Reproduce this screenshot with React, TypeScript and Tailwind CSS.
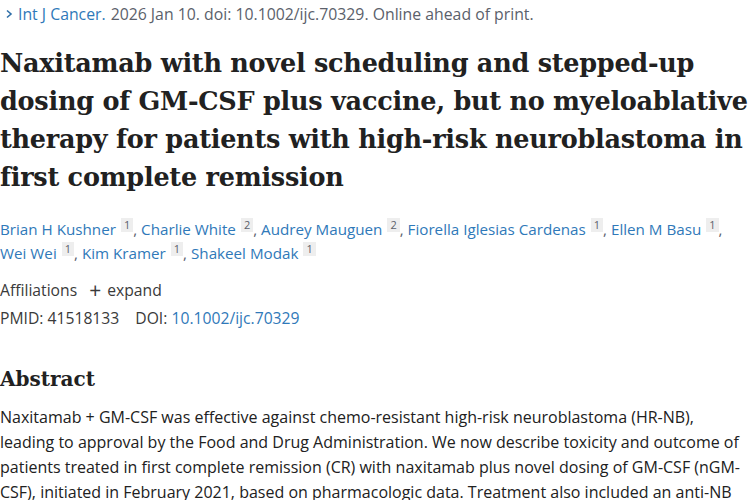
const authorRows: { name: string; aff: string }[][] = [
  [
    { name: "Brian H Kushner", aff: "1" },
    { name: "Charlie White", aff: "2" },
    { name: "Audrey Mauguen", aff: "2" },
    { name: "Fiorella Iglesias Cardenas", aff: "1" },
    { name: "Ellen M Basu", aff: "1" },
  ],
  [
    { name: "Wei Wei", aff: "1" },
    { name: "Kim Kramer", aff: "1" },
    { name: "Shakeel Modak", aff: "1" },
  ],
];

const abstractLines = [
  "Naxitamab + GM-CSF was effective against chemo-resistant high-risk neuroblastoma (HR-NB),",
  "leading to approval by the Food and Drug Administration. We now describe toxicity and outcome of",
  "patients treated in first complete remission (CR) with naxitamab plus novel dosing of GM-CSF (nGM-",
  "CSF), initiated in February 2021, based on pharmacologic data. Treatment also included an anti-NB",
];

export default function App() {
  return (
    <div
      className="w-[750px] h-[500px] overflow-hidden bg-white text-[#212121]"
      style={{ fontFamily: '"Open Sans", "Noto Sans", sans-serif' }}
    >
      <div className="pl-[2px] pt-[2px] text-[15.8px] leading-[24px] text-[#5b616b] flex items-center whitespace-nowrap">
        <svg width="14" height="14" viewBox="0 0 14 14" className="mr-[2px]">
          <path d="M5 3.5 L9 7 L5 10.5" fill="none" stroke="#2f6fa8" strokeWidth="1.6" />
        </svg>
        <a className="text-[#2f79b9] mr-[5px]">Int J Cancer.</a>
        <span>2026 Jan 10. doi: 10.1002/ijc.70329. Online ahead of print.</span>
      </div>

      <h1
        className="mt-[18px] text-[25.5px] leading-[38px] font-bold text-[#212121] tracking-[-0.25px] whitespace-nowrap"
        style={{ fontFamily: '"DejaVu Serif", "Liberation Serif", serif' }}
      >
        <span className="block">Naxitamab with novel scheduling and stepped-up</span>
        <span className="block">dosing of GM-CSF plus vaccine, but no myeloablative</span>
        <span className="block">therapy for patients with high-risk neuroblastoma in</span>
        <span className="block">first complete remission</span>
      </h1>

      <div className="mt-[21px] text-[15.2px] leading-[24px] whitespace-nowrap">
        {authorRows.map((row, r) => (
          <div key={r}>
            {row.map((a, i) => (
              <span key={a.name}>
                <a className="text-[#2f79b9]">{a.name}</a>
                <span className="inline-block align-top ml-[5px] mt-[1px] px-[3px] bg-[#eeeeee] text-[#5b616b] text-[11px] leading-[14px]">
                  {a.aff}
                </span>
                {(r === 0 || i < row.length - 1) && <span className="text-[#5b616b]">, </span>}
              </span>
            ))}
          </div>
        ))}
      </div>

      <div className="mt-[11px] text-[15.7px] leading-[28px] text-[#3a3a3a]">
        <div className="flex items-center">
          <span>Affiliations</span>
          <span className="ml-[12px] text-[21px] leading-none mr-[6px]">+</span>
          <span>expand</span>
        </div>
        <div>
          <span>PMID: 41518133</span>
          <span className="ml-[16px]">DOI: </span>
          <a className="text-[#2f79b9]">10.1002/ijc.70329</a>
        </div>
      </div>

      <h2
        className="mt-[32px] text-[20px] leading-[30px] font-semibold text-[#212121]"
        style={{ fontFamily: '"DejaVu Serif", "Liberation Serif", serif' }}
      >
        Abstract
      </h2>

      <p className="mt-[11px] text-[16px] leading-[25px] text-[#212121] whitespace-nowrap">
        {abstractLines.map((l) => (
          <span key={l} className="block">
            {l}
          </span>
        ))}
      </p>
    </div>
  );
}
